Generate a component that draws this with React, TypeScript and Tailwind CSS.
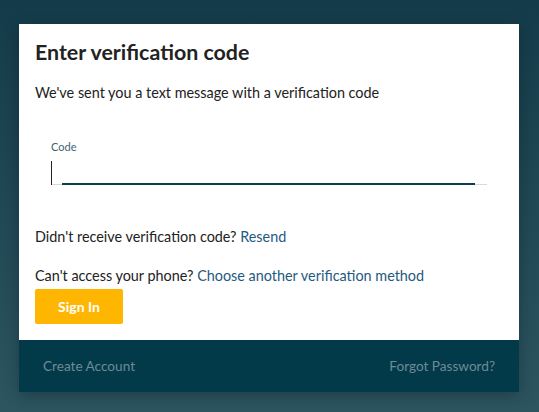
import React from "react";

const App: React.FC = () => {
  return (
    <div
      className="w-[539px] h-[412px] bg-gradient-to-b from-[#143b49] to-[#2c5560] pt-[24px] pl-[19px]"
      style={{ fontFamily: "Lato, 'Open Sans', sans-serif" }}
    >
      <div className="w-[500px] shadow-[0_4px_14px_rgba(0,0,0,0.25)]">
        <div className="bg-white h-[316px] px-[16px] pt-[14px]">
          <h1 className="text-[21.4px] font-bold text-[#222] leading-[28px]">
            Enter verification code
          </h1>
          <p className="text-[14.4px] text-[#222] mt-[17px] leading-[20px]">
            We've sent you a text message with a verification code
          </p>
          <div className="ml-[16px] mr-[16px] mt-[37px]">
            <label className="block text-[11px] text-[#3d6470] leading-[14px]">Code</label>
            <div className="relative h-[26px] mt-[5px] border-b border-[#d8d8d8]">
              <div className="absolute left-0 top-[2px] w-px h-[24px] bg-[#222]" />
              <div className="absolute left-[11px] right-[12px] bottom-[-1px] h-[2px] bg-[#0a3e4e]" />
            </div>
          </div>
          <p className="text-[14.4px] text-[#222] mt-[42px] leading-[20px]">
            Didn't receive verification code?{" "}
            <a className="text-[#1f5a80]">Resend</a>
          </p>
          <p className="text-[14.4px] text-[#222] mt-[19px] leading-[20px]">
            Can't access your phone?{" "}
            <a className="text-[#1f5a80]">Choose another verification method</a>
          </p>
          <button className="mt-[3px] w-[88px] h-[35px] bg-[#ffb600] text-white text-[14px] font-bold rounded-[2px]">
            Sign In
          </button>
        </div>
        <div className="bg-[#023a4a] h-[52px] flex items-center justify-between px-[24px] text-[13.6px] text-[#6c8b95]">
          <span>Create Account</span>
          <span>Forgot Password?</span>
        </div>
      </div>
    </div>
  );
};

export default App;
